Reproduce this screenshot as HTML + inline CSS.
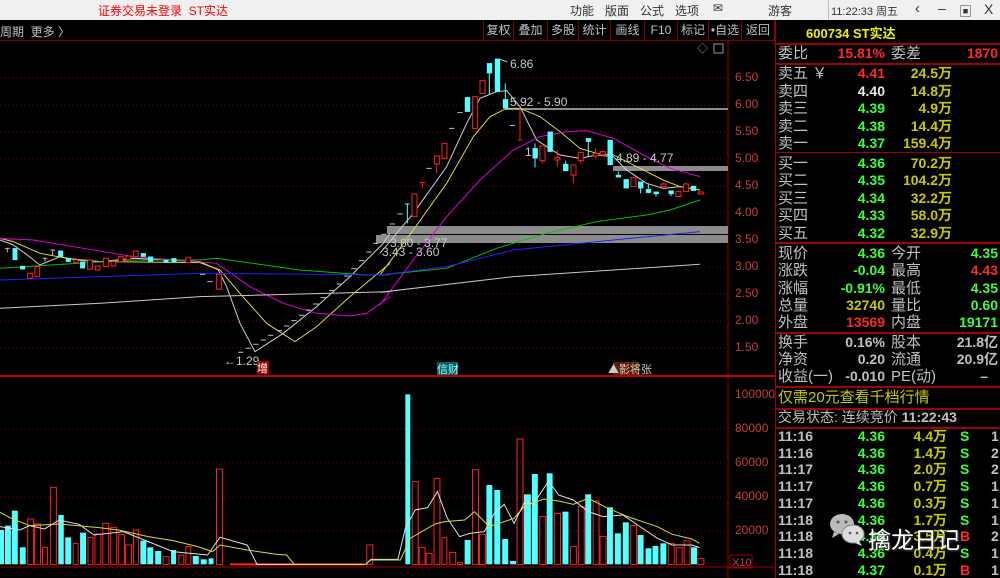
<!DOCTYPE html>
<html><head><meta charset="utf-8"><style>
*{margin:0;padding:0;box-sizing:border-box}
body{width:1000px;height:578px;background:#000;overflow:hidden;position:relative;font-family:"Liberation Sans","Noto Sans CJK SC",sans-serif}
.a{position:absolute;white-space:nowrap}
#top{position:absolute;left:0;top:0;width:1000px;height:20px;background:#f0f0f0;font-size:12px;color:#333}
#tb{position:absolute;left:0;top:20px;width:1000px;height:20px;background:#000;font-size:12px;color:#c0c0c0}
.btn{position:absolute;top:0;height:20px;border-left:1px solid #800000;text-align:center;line-height:20px;color:#c0c0c0;font-size:12px}
#rp{position:absolute;left:775px;top:40px;width:225px;height:538px;font-size:14px}
.hl{position:absolute;left:0;width:225px;height:2px;background:#a00000}
.l{position:absolute;left:3px;color:#c0c0c0;font-size:15px;line-height:17px}
.v{position:absolute;text-align:right;font-size:14px;font-weight:bold;line-height:17px}
.g{color:#3cff3c}.y{color:#c8c800}.r{color:#ff2828}.w{color:#e8e8e8}.gr{color:#c0c0c0}
.ax{position:absolute;left:735px;color:#c83c3c;font-size:12px}
</style></head><body>
<div id="top">
<span class="a" style="left:98px;top:2px;color:#f00;font-size:12px">证券交易未登录&nbsp; ST实达</span>
<span class="a" style="left:570px;top:2px">功能</span><span class="a" style="left:605px;top:2px">版面</span><span class="a" style="left:640px;top:2px">公式</span><span class="a" style="left:675px;top:2px">选项</span>
<span class="a" style="left:713px;top:1px;font-size:12px">✉</span>
<span class="a" style="left:768px;top:2px">游客</span>
<div class="a" style="left:828px;top:0;width:1px;height:20px;background:#bbb"></div>
<span class="a" style="left:831px;top:3px;font-size:11px">11:22:33 周五</span>
<span class="a" style="left:915px;top:0;font-size:15px">‹</span><span class="a" style="left:938px;top:0;font-size:14px">–</span><span class="a" style="left:959px;top:1px;font-size:13px">▣</span><span class="a" style="left:984px;top:1px;font-size:14px">X</span>
</div>
<div id="tb">
<span class="a" style="left:0;top:3px">周期&nbsp; 更多 〉</span>
<div class="btn" style="left:483px;width:30px">复权</div><div class="btn" style="left:513px;width:34px">叠加</div><div class="btn" style="left:547px;width:31px">多股</div><div class="btn" style="left:578px;width:32px">统计</div><div class="btn" style="left:610px;width:34px">画线</div><div class="btn" style="left:644px;width:33px">F10</div><div class="btn" style="left:677px;width:31px">标记</div><div class="btn" style="left:708px;width:33px">•自选</div><div class="btn" style="left:741px;width:34px;border-right:1px solid #800000">返回</div>
<span class="a" style="left:806px;top:3px;color:#f0f000;font-size:13px;font-weight:bold">600734 ST实达</span>
</div>
<div class="a" style="left:0;top:40px;width:775px;height:1px;background:#800000"></div>
<div class="a" style="left:775px;top:20px;width:1px;height:558px;background:#a00000"></div>

<svg class="a" style="left:0;top:0" width="775" height="578">
<g stroke="#8c0000" stroke-dasharray="1,3" stroke-width="1">
<line x1="0" y1="78" x2="727" y2="78"/><line x1="0" y1="105" x2="727" y2="105"/><line x1="0" y1="132" x2="727" y2="132"/><line x1="0" y1="159" x2="727" y2="159"/><line x1="0" y1="186" x2="727" y2="186"/><line x1="0" y1="213" x2="727" y2="213"/><line x1="0" y1="240" x2="727" y2="240"/><line x1="0" y1="267" x2="727" y2="267"/><line x1="0" y1="294" x2="727" y2="294"/><line x1="0" y1="321" x2="727" y2="321"/><line x1="0" y1="348" x2="727" y2="348"/>
<line x1="0" y1="429" x2="727" y2="429"/><line x1="0" y1="463" x2="727" y2="463"/><line x1="0" y1="497" x2="727" y2="497"/><line x1="0" y1="531" x2="727" y2="531"/>
</g>
<line x1="728" y1="40" x2="728" y2="578" stroke="#a00000"/>
<line x1="0" y1="376" x2="775" y2="376" stroke="#c00000" stroke-width="2"/>
<line x1="0" y1="567" x2="775" y2="567" stroke="#a00000"/>
<!-- bands -->
<rect x="387" y="226" width="341" height="8" fill="#8c8c8c"/><rect x="376" y="235" width="352" height="8" fill="#8c8c8c"/>
<rect x="505" y="108" width="223" height="2" fill="#8c8c8c"/><rect x="613" y="166" width="115" height="5" fill="#8c8c8c"/>
<g fill="none" stroke-width="1">
<!-- group A zoom5 coords -->
<g transform="translate(0,40) scale(0.3333)">
<polyline vector-effect="non-scaling-stroke" stroke="#d0d0d0" points="0,600 40,615 75,640 120,675 180,650 230,660 300,665 400,655 500,660 600,665 655,690 680,740 720,850 765,935 850,880 950,800 1050,710 1150,610 1170,580"/>
<polyline vector-effect="non-scaling-stroke" stroke="#d8d840" points="0,595 40,605 120,640 200,655 300,665 600,668 660,690 720,760 800,850 885,905 950,860 1050,770 1170,670"/>
<polyline vector-effect="non-scaling-stroke" stroke="#e000e0" points="0,595 100,600 250,625 400,650 650,670 750,740 850,790 950,820 1050,828 1100,820 1170,770"/>
<polyline vector-effect="non-scaling-stroke" stroke="#00c000" points="0,685 200,672 400,660 600,660 650,655 900,690 1100,705 1170,705"/>
<polyline vector-effect="non-scaling-stroke" stroke="#2020ff" points="0,720 300,710 600,700 1170,705"/>
<polyline vector-effect="non-scaling-stroke" stroke="#c8c8c8" points="0,805 300,790 600,770 1170,755"/>
<g stroke="#c0c0c0"><path vector-effect="non-scaling-stroke" d="M600 703h16M622 725h16M714 937h16M737 925h16M760 913h16M782 900h16M804 886h16M830 872h16M852 858h16M874 842h16M897 826h16M917 810h16M940 792h16M962 773h16M987 752h16M1010 732h16M1032 708h16M1054 686h16M1077 662h16M1099 636h16M1120 610h16M15 625h14M22 625v12M128 655h14M135 655v10M151 630h14M158 630v18"/></g>
<g fill="#54ffff" stroke="#54ffff"><rect x="38" y="625" width="14" height="35"/><rect x="61" y="678" width="14" height="10"/><rect x="175" y="632" width="14" height="18"/><rect x="198" y="655" width="14" height="10"/><rect x="241" y="665" width="14" height="20"/><rect x="423" y="640" width="14" height="10"/><rect x="445" y="650" width="14" height="15"/><rect x="491" y="660" width="14" height="8"/><rect x="515" y="655" width="14" height="12"/></g>
<g stroke="#ff2020" fill="#000"><rect vector-effect="non-scaling-stroke" x="83" y="700" width="14" height="15"/><rect vector-effect="non-scaling-stroke" x="105" y="680" width="14" height="30"/><rect vector-effect="non-scaling-stroke" x="221" y="660" width="14" height="8"/><rect vector-effect="non-scaling-stroke" x="263" y="660" width="14" height="28"/><rect vector-effect="non-scaling-stroke" x="286" y="678" width="14" height="12"/><rect vector-effect="non-scaling-stroke" x="311" y="655" width="14" height="25"/><rect vector-effect="non-scaling-stroke" x="333" y="665" width="14" height="13"/><rect vector-effect="non-scaling-stroke" x="355" y="650" width="14" height="15"/><rect vector-effect="non-scaling-stroke" x="378" y="648" width="14" height="12"/><rect vector-effect="non-scaling-stroke" x="400" y="633" width="14" height="17"/><rect vector-effect="non-scaling-stroke" x="558" y="652" width="14" height="16"/><rect vector-effect="non-scaling-stroke" x="650" y="703" width="14" height="45"/></g>
</g>
<!-- group B zoom6 coords -->
<g transform="translate(380,40) scale(0.3333)">
<polyline vector-effect="non-scaling-stroke" stroke="#d0d0d0" points="0,640 100,520 200,380 260,250 300,175 350,155 380,152 420,200 470,300 540,345 600,355 650,345 700,350 740,390 800,430 850,445 900,440 960,450"/>
<polyline vector-effect="non-scaling-stroke" stroke="#d8d840" points="0,705 100,570 200,430 280,290 330,230 380,205 420,205 480,230 540,275 600,325 650,340 700,345 760,375 850,420 900,440 960,450"/>
<polyline vector-effect="non-scaling-stroke" stroke="#e000e0" points="0,795 100,660 200,530 300,420 400,330 480,290 560,275 620,272 700,295 800,350 870,385 960,410"/>
<polyline vector-effect="non-scaling-stroke" stroke="#00c000" points="0,705 100,695 200,685 350,625 500,580 650,545 800,525 870,510 960,480"/>
<polyline vector-effect="non-scaling-stroke" stroke="#2020ff" points="0,705 200,680 400,630 700,600 960,575"/>
<polyline vector-effect="non-scaling-stroke" stroke="#c8c8c8" points="0,757 400,710 960,673"/>
<g stroke="#c0c0c0"><path vector-effect="non-scaling-stroke" d="M4 583h16M29 552h16M52 522h16M139 385h16M207 265h16M232 218h16M389 256h16"/></g>
<g stroke="#54ffff"><path vector-effect="non-scaling-stroke" d="M82 492v58M75 492h14M328 100v65M376 130v48M465 310v72M557 362v10M625 305v45M715 395v10M782 445v15M805 430v30M828 462v8M873 462v6"/></g>
<g fill="#54ffff" stroke="#54ffff"><rect x="255" y="172" width="15" height="43"/><rect x="321" y="70" width="15" height="30"/><rect x="345" y="56" width="15" height="99"/><rect x="369" y="178" width="15" height="27"/><rect x="458" y="325" width="15" height="30"/><rect x="503" y="275" width="15" height="60"/><rect x="550" y="372" width="15" height="21"/><rect x="618" y="295" width="15" height="10"/><rect x="683" y="300" width="15" height="75"/><rect x="708" y="405" width="15" height="7"/><rect x="731" y="418" width="15" height="27"/><rect x="775" y="425" width="15" height="20"/><rect x="798" y="448" width="15" height="10"/><rect x="821" y="455" width="15" height="7"/><rect x="866" y="452" width="15" height="10"/><rect x="933" y="438" width="15" height="14"/></g>
<g stroke="#ff2020"><path vector-effect="non-scaling-stroke" d="M118 428h18M127 428v17M170 372v28M420 205v95M413 300h15M487 362v8M532 330v50M580 405v25M602 362v8M647 325v30M850 428v4M918 428v4"/></g>
<g stroke="#ff2020" fill="#000"><rect vector-effect="non-scaling-stroke" x="96" y="462" width="15" height="68"/><rect vector-effect="non-scaling-stroke" x="163" y="348" width="15" height="24"/><rect vector-effect="non-scaling-stroke" x="186" y="310" width="15" height="45"/><rect vector-effect="non-scaling-stroke" x="278" y="170" width="15" height="95"/><rect vector-effect="non-scaling-stroke" x="300" y="122" width="15" height="38"/><rect vector-effect="non-scaling-stroke" x="480" y="318" width="15" height="44"/><rect vector-effect="non-scaling-stroke" x="525" y="352" width="15" height="8"/><rect vector-effect="non-scaling-stroke" x="573" y="375" width="15" height="30"/><rect vector-effect="non-scaling-stroke" x="595" y="338" width="15" height="24"/><rect vector-effect="non-scaling-stroke" x="640" y="340" width="15" height="8"/><rect vector-effect="non-scaling-stroke" x="661" y="335" width="15" height="10"/><rect vector-effect="non-scaling-stroke" x="753" y="412" width="15" height="28"/><rect vector-effect="non-scaling-stroke" x="843" y="432" width="15" height="8"/><rect vector-effect="non-scaling-stroke" x="888" y="455" width="15" height="15"/><rect vector-effect="non-scaling-stroke" x="911" y="432" width="15" height="23"/><rect vector-effect="non-scaling-stroke" x="955" y="456" width="15" height="6"/></g>
<path vector-effect="non-scaling-stroke" stroke="#c0c0c0" d="M360 58l22 8"/>
</g>
<!-- volume zoom7 coords -->
<g transform="translate(0,375) scale(0.4943,0.3333)">
<g fill="#54ffff"><rect x="0" y="465" width="8" height="103"/><rect x="10" y="452" width="12" height="116"/><rect x="24" y="407" width="12" height="161"/><rect x="40" y="517" width="12" height="51"/><rect x="118" y="420" width="11" height="148"/><rect x="132" y="487" width="12" height="81"/><rect x="162" y="473" width="12" height="95"/><rect x="284" y="497" width="12" height="71"/><rect x="298" y="517" width="12" height="51"/><rect x="314" y="528" width="12" height="40"/><rect x="346" y="525" width="10" height="43"/><rect x="390" y="543" width="12" height="25"/><rect x="406" y="553" width="12" height="15"/><rect x="422" y="550" width="10" height="18"/><rect x="820" y="58" width="10" height="510"/><rect x="940" y="495" width="12" height="73"/><rect x="984" y="330" width="12" height="238"/><rect x="1000" y="345" width="12" height="223"/><rect x="1016" y="492" width="12" height="76"/><rect x="1032" y="558" width="12" height="10"/><rect x="1060" y="358" width="14" height="210"/><rect x="1076" y="297" width="12" height="271"/><rect x="1106" y="295" width="12" height="273"/><rect x="1138" y="410" width="12" height="158"/><rect x="1184" y="358" width="12" height="210"/><rect x="1228" y="397" width="12" height="171"/><rect x="1244" y="475" width="12" height="93"/><rect x="1260" y="442" width="12" height="126"/><rect x="1290" y="480" width="12" height="88"/><rect x="1306" y="520" width="12" height="48"/><rect x="1320" y="513" width="12" height="55"/><rect x="1336" y="505" width="12" height="63"/><rect x="1398" y="517" width="12" height="51"/></g>
<g fill="none" stroke="#ff2020"><rect vector-effect="non-scaling-stroke" x="56" y="432" width="12" height="136"/><rect vector-effect="non-scaling-stroke" x="70" y="447" width="12" height="121"/><rect vector-effect="non-scaling-stroke" x="86" y="517" width="10" height="51"/><rect vector-effect="non-scaling-stroke" x="102" y="337" width="12" height="231"/><rect vector-effect="non-scaling-stroke" x="148" y="505" width="10" height="63"/><rect vector-effect="non-scaling-stroke" x="178" y="487" width="10" height="81"/><rect vector-effect="non-scaling-stroke" x="192" y="477" width="12" height="91"/><rect vector-effect="non-scaling-stroke" x="208" y="445" width="12" height="123"/><rect vector-effect="non-scaling-stroke" x="224" y="457" width="12" height="111"/><rect vector-effect="non-scaling-stroke" x="240" y="479" width="12" height="89"/><rect vector-effect="non-scaling-stroke" x="254" y="510" width="12" height="58"/><rect vector-effect="non-scaling-stroke" x="270" y="465" width="10" height="103"/><rect vector-effect="non-scaling-stroke" x="330" y="545" width="12" height="23"/><rect vector-effect="non-scaling-stroke" x="362" y="540" width="10" height="28"/><rect vector-effect="non-scaling-stroke" x="376" y="515" width="10" height="53"/><rect vector-effect="non-scaling-stroke" x="438" y="282" width="12" height="286"/><rect vector-effect="non-scaling-stroke" x="742" y="510" width="12" height="58"/><rect vector-effect="non-scaling-stroke" x="834" y="320" width="12" height="248"/><rect vector-effect="non-scaling-stroke" x="848" y="517" width="12" height="51"/><rect vector-effect="non-scaling-stroke" x="862" y="535" width="12" height="33"/><rect vector-effect="non-scaling-stroke" x="878" y="310" width="12" height="258"/><rect vector-effect="non-scaling-stroke" x="894" y="487" width="10" height="81"/><rect vector-effect="non-scaling-stroke" x="910" y="532" width="12" height="36"/><rect vector-effect="non-scaling-stroke" x="926" y="562" width="10" height="6"/><rect vector-effect="non-scaling-stroke" x="956" y="284" width="12" height="284"/><rect vector-effect="non-scaling-stroke" x="970" y="478" width="12" height="90"/><rect vector-effect="non-scaling-stroke" x="1046" y="192" width="12" height="376"/><rect vector-effect="non-scaling-stroke" x="1092" y="425" width="12" height="143"/><rect vector-effect="non-scaling-stroke" x="1122" y="415" width="12" height="153"/><rect vector-effect="non-scaling-stroke" x="1154" y="515" width="12" height="53"/><rect vector-effect="non-scaling-stroke" x="1170" y="395" width="12" height="173"/><rect vector-effect="non-scaling-stroke" x="1200" y="378" width="12" height="190"/><rect vector-effect="non-scaling-stroke" x="1214" y="484" width="12" height="84"/><rect vector-effect="non-scaling-stroke" x="1276" y="452" width="12" height="116"/><rect vector-effect="non-scaling-stroke" x="1352" y="505" width="12" height="63"/><rect vector-effect="non-scaling-stroke" x="1368" y="518" width="12" height="50"/><rect vector-effect="non-scaling-stroke" x="1384" y="498" width="12" height="70"/><rect vector-effect="non-scaling-stroke" x="1412" y="550" width="12" height="18"/></g>
<path vector-effect="non-scaling-stroke" stroke="#ff2020" stroke-width="2" d="M465 568h270"/>
<polyline vector-effect="non-scaling-stroke" stroke="#e0e0e0" points="0,455 40,465 60,452 90,462 120,435 160,448 190,480 250,470 300,500 350,530 420,540 445,487 500,510 520,568 740,568 750,553 805,553 820,460 840,405 865,398 885,350 905,430 930,485 950,475 980,470 1000,415 1020,388 1040,445 1060,385 1080,385 1110,318 1130,360 1160,375 1190,410 1220,425 1260,420 1290,450 1330,490 1360,510 1400,510 1415,518"/>
<polyline vector-effect="non-scaling-stroke" stroke="#d8d840" points="0,412 20,428 60,452 120,447 200,458 240,465 300,485 350,497 400,515 430,530 445,510 500,525 560,538 580,540 595,568 740,568 750,555 810,555 830,490 880,447 900,440 940,435 960,410 990,455 1040,430 1060,395 1100,372 1130,378 1160,388 1190,370 1230,400 1270,425 1330,455 1360,478 1400,492 1415,505"/>
</g>
</g>
<g fill="#c8c8c8" font-size="12" font-family="Liberation Sans">
<text x="510" y="68">6.86</text><text x="510" y="106">5.92 - 5.90</text><text x="616" y="162">4.89 - 4.77</text><text x="390" y="247">3.60 - 3.77</text><text x="382" y="256">3.43 - 3.60</text><text x="224" y="365">←1.29</text><text x="525" y="156">1</text>
</g>
<rect x="257" y="361" width="12" height="13" fill="#a00000"/><text x="257" y="372" fill="#fff" font-size="11" font-family="Noto Sans CJK SC">增</text>
<rect x="437" y="362" width="21" height="13" fill="#0a6060"/><text x="437" y="373" fill="#9ff" font-size="11" font-family="Noto Sans CJK SC">信财</text>
<rect x="613" y="362" width="26" height="13" fill="#602000"/><text x="608" y="373" fill="#ccc" font-size="11" font-family="Noto Sans CJK SC">▲影将张</text>
<text x="697" y="52" fill="#999" font-size="11">◇</text><rect x="714" y="44" width="9" height="9" fill="none" stroke="#999"/>
<rect x="730" y="555" width="22" height="13" fill="none" stroke="#a00000"/><text x="732" y="566" fill="#c83c3c" font-size="11">X10</text>
</svg>
<div class="ax" style="top:70px">6.50</div><div class="ax" style="top:97px">6.00</div><div class="ax" style="top:124px">5.50</div><div class="ax" style="top:151px">5.00</div><div class="ax" style="top:178px">4.50</div><div class="ax" style="top:205px">4.00</div><div class="ax" style="top:232px">3.50</div><div class="ax" style="top:259px">3.00</div><div class="ax" style="top:286px">2.50</div><div class="ax" style="top:313px">2.00</div><div class="ax" style="top:340px">1.50</div>
<div class="ax" style="top:387px">100000</div><div class="ax" style="top:421px">80000</div><div class="ax" style="top:455px">60000</div><div class="ax" style="top:489px">40000</div><div class="ax" style="top:523px">20000</div>

<div id="rp">
<div class="hl" style="top:3px"></div>
<div class="l" style="top:5px">委比</div><div class="v r" style="right:115px;top:5px">15.81%</div><div class="l" style="left:116px;top:5px">委差</div><div class="v r" style="right:2px;top:5px">1870</div>
<div class="hl" style="top:23px"></div>
<div class="l" style="top:25px">卖五 ￥</div><div class="v r" style="right:115px;top:25px">4.41</div><div class="v y" style="right:48px;top:25px">24.5万</div>
<div class="l" style="top:43px">卖四</div><div class="v w" style="right:115px;top:43px">4.40</div><div class="v y" style="right:48px;top:43px">14.8万</div>
<div class="l" style="top:60px">卖三</div><div class="v g" style="right:115px;top:60px">4.39</div><div class="v y" style="right:48px;top:60px">4.9万</div>
<div class="l" style="top:78px">卖二</div><div class="v g" style="right:115px;top:78px">4.38</div><div class="v y" style="right:48px;top:78px">14.4万</div>
<div class="l" style="top:95px">卖一</div><div class="v g" style="right:115px;top:95px">4.37</div><div class="v y" style="right:48px;top:95px">159.4万</div>
<div class="hl" style="top:112px;height:1px"></div>
<div class="l" style="top:115px">买一</div><div class="v g" style="right:115px;top:115px">4.36</div><div class="v y" style="right:48px;top:115px">70.2万</div>
<div class="l" style="top:132px">买二</div><div class="v g" style="right:115px;top:132px">4.35</div><div class="v y" style="right:48px;top:132px">104.2万</div>
<div class="l" style="top:150px">买三</div><div class="v g" style="right:115px;top:150px">4.34</div><div class="v y" style="right:48px;top:150px">32.2万</div>
<div class="l" style="top:167px">买四</div><div class="v g" style="right:115px;top:167px">4.33</div><div class="v y" style="right:48px;top:167px">58.0万</div>
<div class="l" style="top:185px">买五</div><div class="v g" style="right:115px;top:185px">4.32</div><div class="v y" style="right:48px;top:185px">32.9万</div>
<div class="hl" style="top:202px"></div>
<div class="l" style="top:205px">现价</div><div class="v g" style="right:115px;top:205px">4.36</div><div class="l" style="left:116px;top:205px">今开</div><div class="v g" style="right:2px;top:205px">4.35</div>
<div class="l" style="top:222px">涨跌</div><div class="v g" style="right:115px;top:222px">-0.04</div><div class="l" style="left:116px;top:222px">最高</div><div class="v r" style="right:2px;top:222px">4.43</div>
<div class="l" style="top:240px">涨幅</div><div class="v g" style="right:115px;top:240px">-0.91%</div><div class="l" style="left:116px;top:240px">最低</div><div class="v g" style="right:2px;top:240px">4.35</div>
<div class="l" style="top:257px">总量</div><div class="v y" style="right:115px;top:257px">32740</div><div class="l" style="left:116px;top:257px">量比</div><div class="v g" style="right:2px;top:257px">0.60</div>
<div class="l" style="top:274px">外盘</div><div class="v r" style="right:115px;top:274px">13569</div><div class="l" style="left:116px;top:274px">内盘</div><div class="v g" style="right:2px;top:274px">19171</div>
<div class="hl" style="top:292px"></div>
<div class="l" style="top:294px">换手</div><div class="v gr" style="right:115px;top:294px">0.16%</div><div class="l" style="left:116px;top:294px">股本</div><div class="v gr" style="right:2px;top:294px">21.8亿</div>
<div class="l" style="top:311px">净资</div><div class="v gr" style="right:115px;top:311px">0.20</div><div class="l" style="left:116px;top:311px">流通</div><div class="v gr" style="right:2px;top:311px">20.9亿</div>
<div class="l" style="top:328px">收益(一)</div><div class="v gr" style="right:115px;top:328px">-0.010</div><div class="l" style="left:116px;top:328px">PE(动)</div><div class="v gr" style="right:12px;top:328px">–</div>
<div class="hl" style="top:346px"></div>
<div class="l" style="top:349px;color:#c8c800">仅需20元查看千档行情</div>
<div class="hl" style="top:368px"></div>
<div class="l" style="top:369px;font-size:14px">交易状态: 连续竞价 <b>11:22:43</b></div>
<div class="hl" style="top:387px"></div>
</div>
<div id="ticks" class="a" style="left:775px;top:428px;width:225px;font-size:14px;font-weight:bold;line-height:16.7px">
<div style="position:relative;height:150px">
<div class="a gr" style="left:3px;top:0">11:16<br>11:16<br>11:17<br>11:17<br>11:17<br>11:18<br>11:18<br>11:18<br>11:18</div>
<div class="a g" style="right:115px;top:0;text-align:right">4.36<br>4.36<br>4.36<br>4.36<br>4.36<br>4.36<br>4.36<br>4.36<br>4.37</div>
<div class="a y" style="right:53px;top:0;text-align:right">4.4万<br>1.4万<br>2.0万<br>0.7万<br>0.3万<br>1.7万<br>3.5万<br>0.4万<br>0.1万</div>
<div class="a" style="left:185px;top:0"><span class="g">S</span><br><span class="g">S</span><br><span class="g">S</span><br><span class="g">S</span><br><span class="g">S</span><br><span class="g">S</span><br><span class="r">B</span><br><span class="g">S</span><br><span class="r">B</span></div>
<div class="a gr" style="left:216px;top:0">1<br>2<br>2<br>1<br>1<br>1<br>2<br>1<br>1</div>
</div></div>
<svg class="a" style="left:828px;top:512px" width="40" height="36"><ellipse cx="14" cy="12" rx="12" ry="10" fill="#bbb"/><path d="M6 20l-2 6 7-4z" fill="#bbb"/><ellipse cx="25" cy="22" rx="11" ry="9" fill="#ddd" stroke="#888"/><path d="M31 29l3 5-7-3z" fill="#ddd"/><circle cx="10" cy="10" r="1.5" fill="#555"/><circle cx="18" cy="10" r="1.5" fill="#555"/><circle cx="22" cy="21" r="1.3" fill="#555"/><circle cx="29" cy="21" r="1.3" fill="#555"/></svg>
<div class="a" style="left:868px;top:521px;font-size:23px;color:#fff;font-family:'Noto Sans CJK SC',sans-serif;text-shadow:1px 1px 2px #555">擒龙日记</div>
</body></html>
